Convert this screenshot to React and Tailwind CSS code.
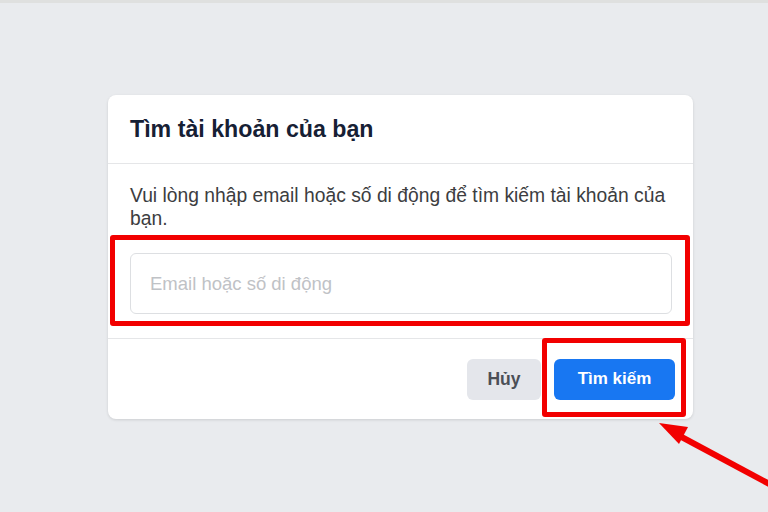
export default function App() {
  return (
    <div className="relative w-[768px] h-[512px] overflow-hidden bg-[#e9ebee]" style={{ fontFamily: '"Liberation Sans", Arial, sans-serif' }}>
      <div className="h-[3px] bg-[#dfe0df]" />
      <div className="ml-[108px] mt-[92px] w-[585px] rounded-[8px] bg-white shadow-[0_1px_3px_rgba(0,0,0,0.12)]">
        <div className="h-[69px] flex items-center px-[22px] border-b border-[#e5e6e8]">
          <h2 className="text-[23.2px] font-bold text-[#162034] mt-[1px]">Tìm tài khoản của bạn</h2>
        </div>
        <div className="relative px-[22px] pt-[20px] pb-[24px] border-b border-[#e5e6e8]">
          <p className="text-[19.3px] leading-[23px] text-[#3c3d3f]">Vui lòng nhập email hoặc số di động để tìm kiếm tài khoản của bạn.</p>
          <div className="mt-[23px] h-[61px] w-[542px] rounded-[6px] border border-[#dddfe2] flex items-center px-[19px]">
            <span className="text-[18.5px] text-[#bfc2c6]">Email hoặc số di động</span>
          </div>
          <div className="absolute left-[2px] top-[71px] w-[580px] h-[91px] border-[5px] border-[#f20000] rounded-[3px]" />
        </div>
        <div className="relative h-[80px] flex items-center justify-end gap-[13px] pr-[18px]">
          <button className="h-[41px] w-[74px] rounded-[6px] bg-[#e4e6eb] text-[17.5px] font-bold text-[#4b4f56]">Hủy</button>
          <button className="h-[41px] w-[121px] rounded-[6px] bg-[#1877f2] text-[17px] font-bold text-white">Tìm kiếm</button>
          <div className="absolute left-[434px] top-[-1px] w-[144px] h-[79px] border-[5px] border-[#f20000] rounded-[3px]" />
        </div>
      </div>
      <svg className="absolute left-0 top-0" width="768" height="512" viewBox="0 0 768 512">
        <line x1="676" y1="434" x2="775" y2="487" stroke="#f20000" strokeWidth="6" />
        <polygon points="659,423 688,427 679,444" fill="#f20000" />
      </svg>
    </div>
  );
}
